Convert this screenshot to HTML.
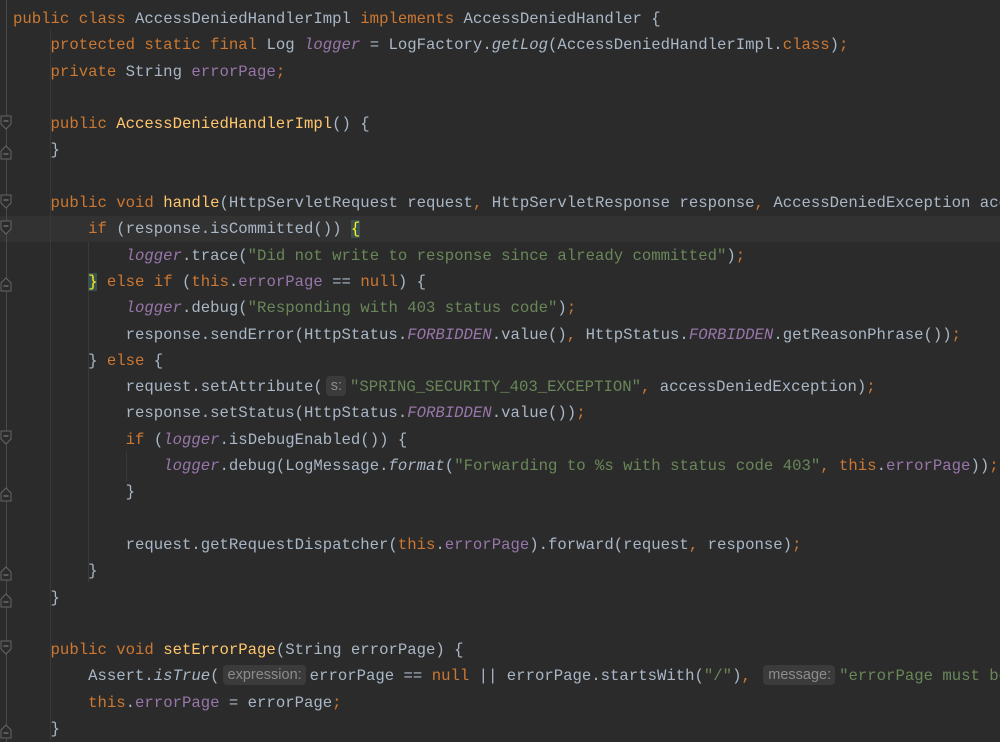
<!DOCTYPE html>
<html><head><meta charset="utf-8"><style>
html,body{margin:0;padding:0;background:#2b2b2b;width:1000px;height:742px;overflow:hidden}
.g{position:absolute;left:6px;top:0;width:1px;height:742px;background:#4a4a4a}
pre{position:absolute;left:13px;top:6px;width:987px;height:736px;overflow:hidden;margin:0;font-family:"Liberation Mono",monospace;font-size:15.65px;line-height:26.3px;color:#a9b7c6;white-space:pre}
.cl{position:absolute;left:0;top:216px;width:1000px;height:26px;background:#323232}
.k{color:#cc7832}.s{color:#6a8759}.f{color:#9876aa}.i{font-style:italic}.m{color:#ffc66d}
.h{display:inline-block;line-height:20px;background:#3b3b3b;color:#8c8c8c;border-radius:4px;font-family:"Liberation Sans",sans-serif;font-size:14.5px;padding:0 4px 0 5px;margin:0 4px 0 3px;vertical-align:1px}
.b{background:#3b514d;color:#ffef28}
.fm{position:absolute;left:0}
.ig{position:absolute;width:1px;background:#393939}
</style></head><body>
<div class="cl"></div>
<div class="g"></div>
<div class="ig" style="left:50px;top:30px;height:710px"></div>
<div class="ig" style="left:88px;top:242px;height:340px"></div>
<div class="ig" style="left:126px;top:452px;height:30px"></div>
<svg class="fm" style="top:115px" width="13" height="20"><path d="M1 1H11V9L6 14L1 9Z" fill="#2b2b2b" stroke="#666"/><path d="M3.5 6H8.5" stroke="#888"/></svg>
<svg class="fm" style="top:140px" width="13" height="20"><path d="M1 19H11V11L6 6L1 11Z" fill="#2b2b2b" stroke="#666"/><path d="M3.5 14H8.5" stroke="#888"/></svg>
<svg class="fm" style="top:194px" width="13" height="20"><path d="M1 1H11V9L6 14L1 9Z" fill="#2b2b2b" stroke="#666"/><path d="M3.5 6H8.5" stroke="#888"/></svg>
<svg class="fm" style="top:220px" width="13" height="20"><path d="M1 1H11V9L6 14L1 9Z" fill="#2b2b2b" stroke="#666"/><path d="M3.5 6H8.5" stroke="#888"/></svg>
<svg class="fm" style="top:272px" width="13" height="20"><path d="M1 19H11V11L6 6L1 11Z" fill="#2b2b2b" stroke="#666"/><path d="M3.5 14H8.5" stroke="#888"/></svg>
<svg class="fm" style="top:430px" width="13" height="20"><path d="M1 1H11V9L6 14L1 9Z" fill="#2b2b2b" stroke="#666"/><path d="M3.5 6H8.5" stroke="#888"/></svg>
<svg class="fm" style="top:482px" width="13" height="20"><path d="M1 19H11V11L6 6L1 11Z" fill="#2b2b2b" stroke="#666"/><path d="M3.5 14H8.5" stroke="#888"/></svg>
<svg class="fm" style="top:561px" width="13" height="20"><path d="M1 19H11V11L6 6L1 11Z" fill="#2b2b2b" stroke="#666"/><path d="M3.5 14H8.5" stroke="#888"/></svg>
<svg class="fm" style="top:588px" width="13" height="20"><path d="M1 19H11V11L6 6L1 11Z" fill="#2b2b2b" stroke="#666"/><path d="M3.5 14H8.5" stroke="#888"/></svg>
<svg class="fm" style="top:640px" width="13" height="20"><path d="M1 1H11V9L6 14L1 9Z" fill="#2b2b2b" stroke="#666"/><path d="M3.5 6H8.5" stroke="#888"/></svg>
<svg class="fm" style="top:719px" width="13" height="20"><path d="M1 19H11V11L6 6L1 11Z" fill="#2b2b2b" stroke="#666"/><path d="M3.5 14H8.5" stroke="#888"/></svg>
<pre><span class="k">public class </span>AccessDeniedHandlerImpl <span class="k">implements </span>AccessDeniedHandler {
    <span class="k">protected static final </span>Log <span class="f i">logger </span>= LogFactory.<span class="i">getLog</span>(AccessDeniedHandlerImpl.<span class="k">class</span>)<span class="k">;</span>
    <span class="k">private </span>String <span class="f">errorPage</span><span class="k">;</span>

    <span class="k">public </span><span class="m">AccessDeniedHandlerImpl</span>() {
    }

    <span class="k">public void </span><span class="m">handle</span>(HttpServletRequest request<span class="k">, </span>HttpServletResponse response<span class="k">, </span>AccessDeniedException accessDeniedException)
        <span class="k">if </span>(response.isCommitted()) <span class="b">{</span>
            <span class="f i">logger</span>.trace(<span class="s">"Did not write to response since already committed"</span>)<span class="k">;</span>
        <span class="b">}</span> <span class="k">else if </span>(<span class="k">this</span>.<span class="f">errorPage </span>== <span class="k">null</span>) {
            <span class="f i">logger</span>.debug(<span class="s">"Responding with 403 status code"</span>)<span class="k">;</span>
            response.sendError(HttpStatus.<span class="f i">FORBIDDEN</span>.value()<span class="k">, </span>HttpStatus.<span class="f i">FORBIDDEN</span>.getReasonPhrase())<span class="k">;</span>
        } <span class="k">else </span>{
            request.setAttribute(<span class="h">s:</span><span class="s">"SPRING_SECURITY_403_EXCEPTION"</span><span class="k">, </span>accessDeniedException)<span class="k">;</span>
            response.setStatus(HttpStatus.<span class="f i">FORBIDDEN</span>.value())<span class="k">;</span>
            <span class="k">if </span>(<span class="f i">logger</span>.isDebugEnabled()) {
                <span class="f i">logger</span>.debug(LogMessage.<span class="i">format</span>(<span class="s">"Forwarding to %s with status code 403"</span><span class="k">, this</span>.<span class="f">errorPage</span>))<span class="k">;</span>
            }

            request.getRequestDispatcher(<span class="k">this</span>.<span class="f">errorPage</span>).forward(request<span class="k">, </span>response)<span class="k">;</span>
        }
    }

    <span class="k">public void </span><span class="m">setErrorPage</span>(String errorPage) {
        Assert.<span class="i">isTrue</span>(<span class="h">expression:</span>errorPage == <span class="k">null </span>|| errorPage.startsWith(<span class="s">"/"</span>)<span class="k">, </span><span class="h">message:</span><span class="s">"errorPage must begin with '/'"</span>)<span class="k">;</span>
        <span class="k">this</span>.<span class="f">errorPage </span>= errorPage<span class="k">;</span>
    }
</pre>
</body></html>
